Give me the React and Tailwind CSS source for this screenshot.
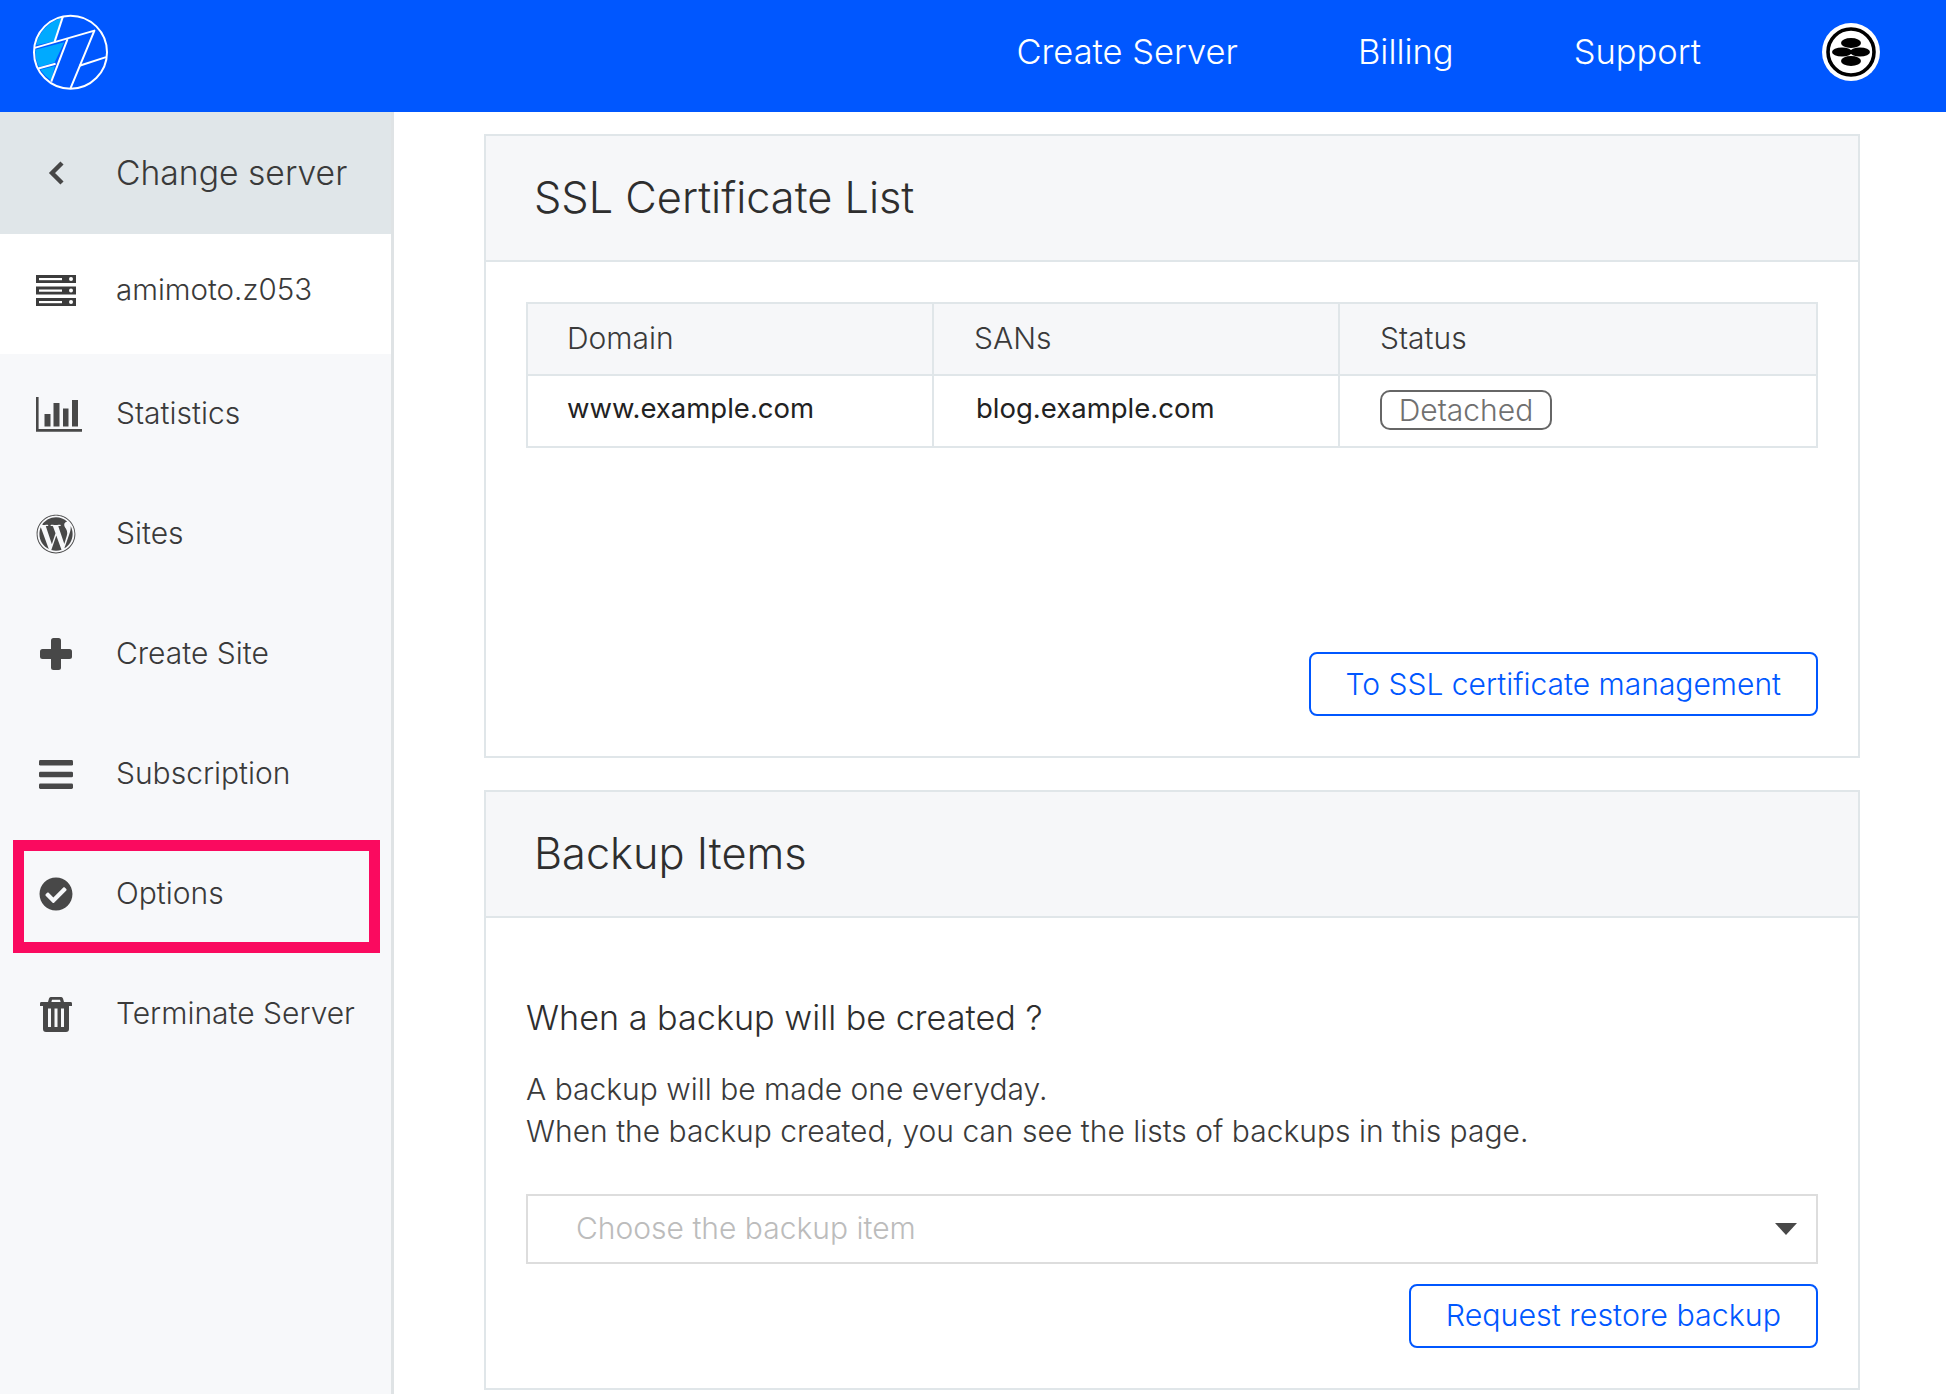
import { FaWordpress, FaCheckCircle } from "react-icons/fa";

function Logo() {
  return (
    <svg viewBox="100 40 226 232" width="75" height="77" fill="none" aria-hidden="true">
      <path d="M186 52 L165 122 L109 134 A110 110 0 0 1 186 52Z" fill="#00aaff" />
      <path d="M107 148 L194 125 L165 186 L118 200 A110 110 0 0 1 107 148Z" fill="#00aaff" />
      <path d="M122 208 L166 197 L155 240 A110 110 0 0 1 122 208Z" fill="#00aaff" />
      <circle cx="213" cy="155" r="110" stroke="#fff" strokeWidth="6" />
      <g stroke="#fff" strokeWidth="6" strokeLinejoin="round">
        <path d="M190 48 L165 124" />
        <path d="M105 142 L285 90 L213 264" />
        <path d="M204 116 L155 244" />
        <path d="M240 196 L320 170" />
        <path d="M116 204 L168 190" />
      </g>
    </svg>
  );
}

function Avatar() {
  return (
    <svg viewBox="0 0 60 60" width="60" height="60" aria-hidden="true">
      <circle cx="30" cy="30" r="29" fill="#fff" />
      <circle cx="30" cy="30" r="23" fill="none" stroke="#000" strokeWidth="3.6" />
      <ellipse cx="30" cy="21" rx="10" ry="5" />
      <ellipse cx="21" cy="30" rx="10" ry="4.6" />
      <ellipse cx="39" cy="30" rx="10" ry="4.6" />
      <ellipse cx="30" cy="39" rx="10" ry="5" />
    </svg>
  );
}

function ServerIcon() {
  return (
    <svg viewBox="0 0 40 31" width="40" height="31" aria-hidden="true">
      {[0, 11.5, 23].map((y) => (
        <g key={y}>
          <rect x="0" y={y} width="40" height="8" fill="#3c3c3c" />
          <rect x="3" y={y + 3} width="23" height="2.2" fill="#fff" />
          <circle cx="35" cy={y + 4} r="2" fill="#fff" />
        </g>
      ))}
    </svg>
  );
}

function ChartIcon() {
  return (
    <svg viewBox="0 0 46 35" width="46" height="35" fill="#484848" className="-mr-[6px] ml-[1px] shrink-0" aria-hidden="true">
      <path d="M0 0h2.600v32H46v2.800H0Z" />
      <rect x="8.500" y="17" width="6" height="12.500" />
      <rect x="17.500" y="6" width="6" height="23.500" />
      <rect x="27" y="11.500" width="5.500" height="18" />
      <rect x="36" y="3" width="6" height="26.500" />
    </svg>
  );
}

function PlusIcon() {
  return (
    <svg viewBox="0 0 32 32" width="32" height="32" fill="#484848" aria-hidden="true">
      <rect x="11" y="0" width="10" height="32" rx="2.500" />
      <rect x="0" y="11" width="32" height="10" rx="2.500" />
    </svg>
  );
}

function BarsIcon() {
  return (
    <svg viewBox="0 0 34 29" width="34" height="29" fill="#484848" aria-hidden="true">
      <rect y="0" width="34" height="5.600" rx="1.400" />
      <rect y="11.700" width="34" height="5.600" rx="1.400" />
      <rect y="23.400" width="34" height="5.600" rx="1.400" />
    </svg>
  );
}

function TrashIcon() {
  return (
    <svg viewBox="0 0 32 35" width="32" height="35" fill="#484848" aria-hidden="true">
      <path
        fillRule="evenodd"
        d="M11 0h10a2 2 0 0 1 2 1.400L24 5h6.600A1.400 1.400 0 0 1 32 6.400V9H29V32a3 3 0 0 1-3 3H6a3 3 0 0 1-3-3V9H0V6.400A1.400 1.400 0 0 1 1.400 5H8L9 1.400A2 2 0 0 1 11 0ZM12 2.800 11.400 5h9.200L20 2.800ZM8 11.500v18.500h3V11.500ZM14.500 11.500v18.500h3V11.500ZM21 11.500v18.500h3V11.500Z"
      />
    </svg>
  );
}

function SidebarItem({ icon, label, className = "", labelClass = "text-[30px]" }) {
  return (
    <div className={`flex h-[120px] items-center ${className}`}>
      <span className="ml-[35px] mr-[40px] flex w-[41px] shrink-0 items-center justify-center">{icon}</span>
      <span className={`pb-[2px] text-[#3a3a3a] ${labelClass}`}>{label}</span>
    </div>
  );
}

function Sidebar() {
  return (
    <aside className="relative w-[394px] shrink-0 border-r-[3px] border-[#dfe3e5] bg-[#f7f8fa] font-light">
      <div className="flex h-[122px] items-center bg-[#e0e6e9]">
        <span className="ml-[35px] mr-[40px] flex w-[41px] items-center justify-center">
          <svg viewBox="0 0 16 24" width="16" height="24" fill="none" stroke="#464646" strokeWidth="4.400" aria-hidden="true">
            <path d="M14 2 L4 12 L14 22" />
          </svg>
        </span>
        <span className="text-[33.700px] text-[#3a3a3a]">Change server</span>
      </div>
      <SidebarItem
        className="bg-white pb-[8px]"
        labelClass="text-[29.500px]"
        icon={<ServerIcon />}
        label="amimoto.z053"
      />
      <SidebarItem icon={<ChartIcon />} label="Statistics" />
      <SidebarItem icon={<FaWordpress size={40} color="#484848" />} label="Sites" />
      <SidebarItem icon={<PlusIcon />} label="Create Site" />
      <SidebarItem icon={<BarsIcon />} label="Subscription" />
      <SidebarItem icon={<FaCheckCircle size={34} color="#484848" />} label="Options" />
      <SidebarItem icon={<TrashIcon />} label="Terminate Server" />
      <div className="absolute left-[13px] top-[728px] h-[113px] w-[367px] border-[11px] border-[#fa0a5f]" />
    </aside>
  );
}

function Card({ title, children, className = "" }) {
  return (
    <section className={`border-2 border-[#e0e6e9] ${className}`}>
      <div className="flex h-[126px] items-center border-b-2 border-[#e0e6e9] bg-[#f6f7f9] pl-[48px]">
        <h2 className="pb-[2px] text-[43.300px] text-[#2e2e2e]">{title}</h2>
      </div>
      {children}
    </section>
  );
}

function OutlineButton({ children, className = "" }) {
  return (
    <button className={`flex h-[64px] items-center rounded-[8px] border-2 border-[#0057ff] bg-white px-[35px] text-[#0057ff] ${className}`}>
      {children}
    </button>
  );
}

export default function App() {
  return (
    <div className="flex h-[1394px] flex-col overflow-hidden bg-white font-['Inter','Noto_Sans',sans-serif] font-light">
      <header className="flex h-[112px] shrink-0 items-center justify-between bg-[#0057ff] pb-[8px] pl-[33px] pr-[65px]">
        <Logo />
        <nav className="flex items-center gap-[120px] text-[34.500px] text-white">
          <span>Create Server</span>
          <span>Billing</span>
          <span>Support</span>
          <Avatar />
        </nav>
      </header>
      <div className="flex flex-1">
        <Sidebar />
        <main className="flex-1 pl-[90px] pr-[86px] pt-[22px]">
          <Card title="SSL Certificate List" className="h-[624px]">
            <div className="px-[40px] pt-[40px]">
              <table className="w-full table-fixed border-collapse">
                <thead>
                  <tr className="h-[72px] bg-[#f6f7f9] text-left text-[30px] text-[#3a3a3a]">
                    <th className="w-[406px] border-2 border-[#e0e6e9] pb-[2px] pl-[39px] font-light">Domain</th>
                    <th className="w-[406px] border-2 border-[#e0e6e9] pb-[2px] pl-[40px] font-light">SANs</th>
                    <th className="border-2 border-[#e0e6e9] pb-[2px] pl-[40px] font-light">Status</th>
                  </tr>
                </thead>
                <tbody>
                  <tr className="h-[72px] text-[27.500px] text-[#222]">
                    <td className="border-2 border-[#e0e6e9] pb-[4px] pl-[39px] font-normal">www.example.com</td>
                    <td className="border-2 border-[#e0e6e9] pb-[4px] pl-[42px] font-normal">blog.example.com</td>
                    <td className="border-2 border-[#e0e6e9] pl-[40px]">
                      <span className="inline-flex h-[40px] w-[172px] items-center justify-center rounded-[10px] border-2 border-[#666] text-[30px] text-[#707070]">
                        Detached
                      </span>
                    </td>
                  </tr>
                </tbody>
              </table>
              <div className="mt-[204px] flex justify-end">
                <OutlineButton className="text-[30px]">To SSL certificate management</OutlineButton>
              </div>
            </div>
          </Card>
          <Card title="Backup Items" className="mt-[32px] h-[600px]">
            <div className="px-[40px] pt-[76px]">
              <h3 className="text-[34.200px] leading-[48px] text-[#2e2e2e]">When a backup will be created ?</h3>
              <p className="mt-[26px] text-[30px] leading-[42px] text-[#3a3a3a]">
                A backup will be made one everyday.
                <br />
                When the backup created, you can see the lists of backups in this page.
              </p>
              <div className="mt-[42px] flex h-[70px] items-center justify-between border-2 border-[#dddddd] pl-[48px] pr-[19px] text-[30px] text-[#bcbcbc]">
                <span className="pb-[2px]">Choose the backup item</span>
                <svg viewBox="0 0 22 12" width="22" height="12" fill="#484848" aria-hidden="true">
                  <path d="M0 0h22L11 12Z" />
                </svg>
              </div>
              <div className="mt-[20px] flex justify-end">
                <OutlineButton className="text-[30.400px]">Request restore backup</OutlineButton>
              </div>
            </div>
          </Card>
        </main>
      </div>
    </div>
  );
}
